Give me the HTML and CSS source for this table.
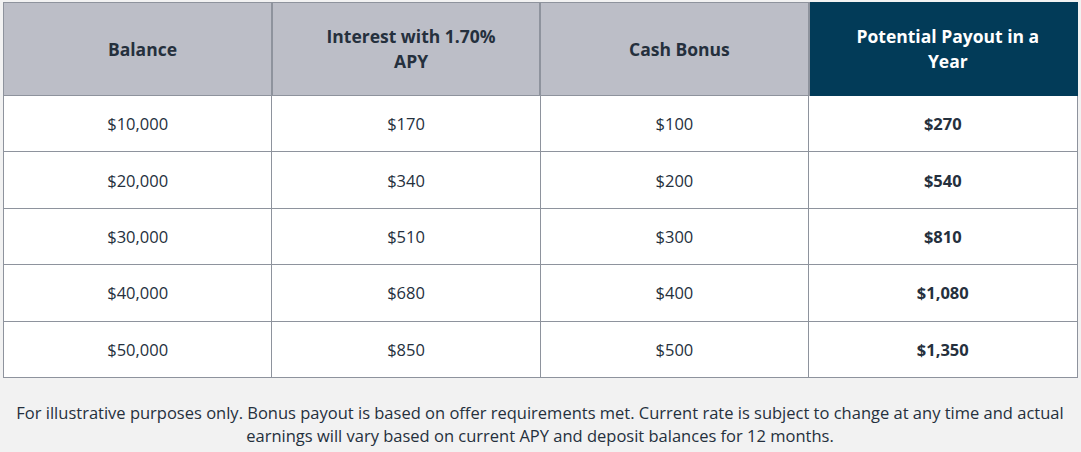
FILE: index.html
```html
<!DOCTYPE html>
<html lang="en">
<head>
<meta charset="utf-8">
<link rel="stylesheet" href="styles.css">
</head>
<body>
<div class="wrap">
<table class="rates">
  <thead>
    <tr>
      <th>Balance</th>
      <th>Interest with 1.70%<br>APY</th>
      <th>Cash Bonus</th>
      <th class="hl">Potential Payout in a<br>Year</th>
    </tr>
  </thead>
  <tbody>
    <tr><td>$10,000</td><td>$170</td><td>$100</td><td class="b">$270</td></tr>
    <tr><td>$20,000</td><td>$340</td><td>$200</td><td class="b">$540</td></tr>
    <tr><td>$30,000</td><td>$510</td><td>$300</td><td class="b">$810</td></tr>
    <tr><td>$40,000</td><td>$680</td><td>$400</td><td class="b">$1,080</td></tr>
    <tr><td>$50,000</td><td>$850</td><td>$500</td><td class="b">$1,350</td></tr>
  </tbody>
</table>
<p class="note">For illustrative purposes only. Bonus payout is based on offer requirements met. Current rate is subject to change at any time and actual earnings will vary based on current APY and deposit balances for 12 months.</p>
</div>
</body>
</html>
```
FILE: styles.css
```css
html, body {
  margin: 0;
  padding: 0;
  background: #f2f2f2;
}
body {
  font-family: "Open Sans", "Noto Sans", sans-serif;
  color: #25303d;
}
.wrap {
  padding: 2px 4px 0 3px;
}
.rates {
  width: 1075px;
  border-collapse: collapse;
  table-layout: fixed;
  background: #fff;
}
.rates th {
  background: #bcbec7;
  font-size: 17.5px;
  font-weight: 700;
  line-height: 25px;
  height: 92px;
  padding: 0 4px 0 14px;
  text-align: center;
  border: 1px solid #8e939d;
  border-right-width: 2px;
  color: #25303d;
}
.rates th.hl {
  background: #023b58;
  color: #fff;
  border-color: #023b58;
}
.rates td {
  height: 55.4px;
  padding: 0 10px;
  text-align: center;
  font-size: 16.5px;
  border: 1px solid #8e939d;
}
.rates td.b {
  font-weight: 700;
}
.note {
  margin: 23px 4px 0;
  text-align: center;
  font-size: 16.5px;
  line-height: 23px;
  color: #25303d;
}
```
